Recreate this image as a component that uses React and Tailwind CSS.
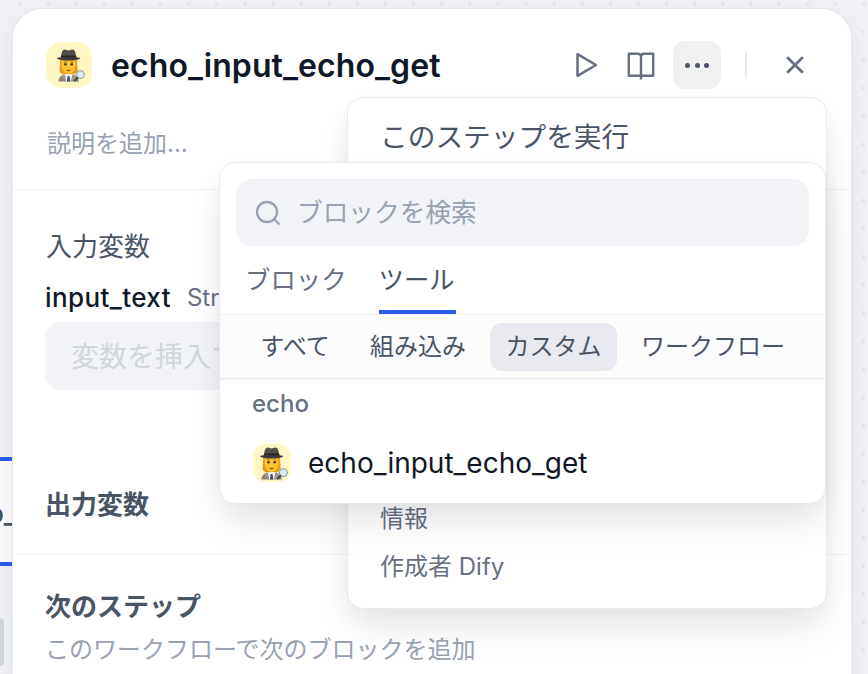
import clsx from 'clsx'

const FILTERS = [
  { id: 'all', label: 'すべて', width: 'w-[102px]' },
  { id: 'builtin', label: '組み込み', width: 'w-[128px]' },
  { id: 'custom', label: 'カスタム', width: 'w-[127px]' },
  { id: 'workflow', label: 'ワークフロー', width: 'w-[176px]' },
]

const TABS = [
  { id: 'blocks', label: 'ブロック' },
  { id: 'tools', label: 'ツール' },
]

function Detective() {
  return (
    <svg viewBox="-2 0 32 33" className="h-[33px] w-8 shrink-0">
      <path d="M3.300 32.500c.3-4 2.300-6 6-6.800h8.600c3.700.8 5.700 2.800 6 6.800z" fill="#8b8376" />
      <path d="M9.800 25.500h7.600l-1.400 7h-4.800z" fill="#f1f2f5" />
      <path d="M12.700 27h1.800l.8 5.500h-3.400z" fill="#414a5e" />
      <path d="M9 25 6 27.300l4.800 5.200zM18.200 25l3 2.300-4.800 5.200z" fill="#a39a8b" />
      <path d="M5.300 10.500h16.600l.8 11.500c-.9 2.300-2.600 3.200-4.500 3.100H9c-1.900.1-3.600-.8-4.500-3.100z" fill="#e99a1d" />
      <path d="M6.800 10.500h13.600v6.300c0 4.600-3.100 8.200-6.800 8.200s-6.800-3.600-6.800-8.200z" fill="#fcc62f" />
      <circle cx="10.500" cy="15.300" r="1.300" fill="#4a2e1c" />
      <circle cx="16.700" cy="15.300" r="1.300" fill="#4a2e1c" />
      <path d="M8.800 13.100q1.500-.8 3-.2M15.400 12.900q1.500-.6 3 .2" stroke="#8a5513" strokeWidth=".7" fill="none" />
      <path d="M11.700 21q1.900 1.100 3.800 0" stroke="#a4491c" strokeWidth="1.200" fill="none" />
      <path d="M6 8.500C6.400 3.500 7.500.6 9.800.6c1.600 0 2.400.8 3.800.8s2.200-.8 3.800-.8c2.300 0 3.400 2.900 3.800 7.900z" fill="#514f4d" />
      <path d="M6 6.600h15.200l.3 3H5.700z" fill="#252423" />
      <path d="M1.800 9c3.300-.9 6.300-.9 11.800-.9s8.500 0 11.800.9c-1.700 2-6.200 2.600-11.800 2.600S3.500 11 1.800 9z" fill="#3c3a39" />
      <circle cx="25.400" cy="25.600" r="3.900" fill="#d9edf6" stroke="#929ba3" strokeWidth="1.100" />
      <path d="m22.500 28.700-2.500 3" stroke="#44474c" strokeWidth="1.800" strokeLinecap="round" />
    </svg>
  )
}

function PlayIcon() {
  return (
    <svg width="24" height="28" viewBox="0 0 24 28" fill="none" stroke="#676f83" strokeWidth="2.500" strokeLinejoin="round">
      <path d="M2.500 3.200v21.600L21 14z" />
    </svg>
  )
}

function BookIcon() {
  return (
    <svg width="30" height="30" viewBox="0 0 30 30" fill="none" stroke="#676f83" strokeWidth="2.400" strokeLinejoin="round">
      <path d="M15 29.500V7c0-2-1.200-3.200-3-3.200H2.800v21.900h24.400V3.800H18c-1.800 0-3 1.200-3 3.200" />
    </svg>
  )
}

function PanelHeader() {
  return (
    <div className="h-[181px] border-b border-[#eff0f2] pt-8 pl-[33px] pr-7">
      <div className="flex h-12 items-center">
        <div className="flex size-[46px] shrink-0 items-center justify-center rounded-[15px] bg-[#fef7c3]">
          <Detective />
        </div>
        <h1 className="ml-[19px] w-[464px] shrink-0 pt-0.5 text-[32px] leading-[46px] font-semibold tracking-[0.08px] text-[#101828]">echo_input_echo_get</h1>
        <div className="flex shrink-0 items-center">
          <PlayIcon />
          <div className="ml-[27px]"><BookIcon /></div>
          <div className="ml-[17px] flex size-12 items-center justify-center gap-[4.400px] rounded-xl bg-[#f1f1f1]">
            <span className="size-[5px] rounded-full bg-[#495464]" />
            <span className="size-[5px] rounded-full bg-[#495464]" />
            <span className="size-[5px] rounded-full bg-[#495464]" />
          </div>
          <div className="ml-6 h-7 w-0.5 bg-[#e9eaef]" />
          <svg className="ml-[39px]" width="18" height="18" viewBox="0 0 18 18" stroke="#676f83" strokeWidth="2.800">
            <path d="m1.200 1.200 15.600 15.600M16.800 1.200 1.200 16.800" />
          </svg>
        </div>
      </div>
      <p className="mt-[37px] pl-px text-2xl leading-9 text-[#98a2b2]">説明を追加...</p>
    </div>
  )
}

function StepPanel() {
  return (
    <main className="ml-[13px] mt-[9px] flex h-[700px] w-[838px] flex-col rounded-[30px] bg-white shadow-[0_0_0_1px_#e8e9ed,0_6px_20px_rgba(16,24,40,0.07)]">
      <PanelHeader />
      <section className="h-[365px] border-b border-[#eff0f2] pt-[39px] pl-8 pr-8">
        <h2 className="pl-px text-[26px] leading-9 text-[#495464]">入力変数</h2>
        <div className="mt-[14px] flex h-9 items-center gap-4">
          <span className="pt-px text-[26px] leading-9 font-medium tracking-[0.4px] text-[#101828]">input_text</span>
          <span className="pt-px text-2xl leading-9 text-[#676f83]">String</span>
        </div>
        <div className="mt-[7px] flex h-[68px] items-center rounded-2xl bg-[#f2f3f7] pl-[26px] pt-0.5 text-[28px] text-[#d0d5dc]">変数を挿入する</div>
        <h2 className="mt-[97px] text-[26px] leading-9 font-bold text-[#495464]">出力変数</h2>
      </section>
      <section className="pt-[34px] pl-8">
        <h2 className="text-[26px] leading-9 font-bold text-[#495464]">次のステップ</h2>
        <p className="mt-[7px] text-2xl leading-9 text-[#98a2b2]">このワークフローで次のブロックを追加</p>
      </section>
    </main>
  )
}

function StepMenu() {
  return (
    <div className="absolute top-[97px] left-[347px] flex h-[512px] w-[480px] flex-col justify-between rounded-2xl border border-[#e8eaed] bg-white px-8 pt-[19px] pb-[23px] shadow-[0_24px_40px_-8px_rgba(16,24,40,0.10),0_8px_24px_-2px_rgba(16,24,40,0.05)]">
      <div className="text-[27.700px] leading-10 text-[#495464]">このステップを実行</div>
      <div className="flex flex-col gap-3 text-2xl leading-9 text-[#676f83]">
        <div>情報</div>
        <div>作成者 Dify</div>
      </div>
    </div>
  )
}

function BlockSelector() {
  return (
    <div className="absolute top-[162px] left-[219px] flex h-[342px] w-[607px] flex-col overflow-hidden rounded-2xl border border-[#e8eaed] bg-white shadow-[0_24px_40px_-8px_rgba(16,24,40,0.10),0_8px_24px_-2px_rgba(16,24,40,0.05)]">
      <div className="mx-4 mt-4 flex h-[67px] shrink-0 items-center rounded-2xl bg-[#f2f3f7] pl-[19px]">
        <svg width="26" height="26" viewBox="0 0 26 26" fill="none" stroke="#98a2b2" strokeWidth="2.300">
          <circle cx="12" cy="12" r="10" />
          <path d="m18.800 18.800 5.600 5.600" />
        </svg>
        <span className="ml-4 pt-px text-[25.700px] text-[#98a2b2]">ブロックを検索</span>
      </div>
      <div className="flex h-[69px] shrink-0 gap-8 border-b border-[#eff0f2] pl-[25px]">
        {TABS.map(t => (
          <div key={t.id} className={clsx('h-[68px] shrink-0 border-b-4 pt-4 text-[25.400px] leading-9 whitespace-nowrap',
            t.id === 'tools' ? 'w-[77px] border-[#2b5ce8] text-[#495464]' : 'border-transparent text-[#676f83]'
          )}>{t.label}</div>
        ))}
      </div>
      <div className="flex h-16 shrink-0 items-center gap-2 border-b border-[#e6e8ec] bg-[#fcfcfc] pl-6 shadow-[0_2px_4px_rgba(16,24,40,0.04)]">
        {FILTERS.map(f => (
          <div key={f.id} className={clsx('flex h-12 shrink-0 items-center justify-center rounded-xl pt-px text-2xl text-[#495464]', f.width,
            f.id === 'custom' && 'bg-[#e9eaef]'
          )}>{f.label}</div>
        ))}
      </div>
      <div className="pt-[7px] pl-[33px]">
        <div className="-ml-px text-2xl leading-9 font-medium text-[#676f83]">echo</div>
        <div className="mt-[22px] flex h-[38px] items-center">
          <div className="flex size-[38px] shrink-0 items-center justify-center rounded-xl bg-[#fef7c3]">
            <Detective />
          </div>
          <span className="ml-[17px] text-[28px] text-[#101828]">echo_input_echo_get</span>
        </div>
      </div>
    </div>
  )
}

// neighbouring node of the canvas, mostly hidden behind the panel
function CanvasNode() {
  return (
    <div className="absolute top-[457px] left-0 w-3">
      <div className="h-[109px] border-y-4 border-[#2b5ce8] bg-[#fbfbfd]">
        <div className="flex h-full items-center justify-end pt-1 text-[26px] font-semibold text-[#495464]">
          <span className="-mr-1">o_</span>
        </div>
      </div>
      <div className="mt-[52px] h-12 w-1 rounded-r bg-[#d0d5dc]" />
    </div>
  )
}

export default function App() {
  return (
    <div
      lang="ja"
      className="relative flex h-[674px] w-[868px] flex-col overflow-hidden bg-[#f0f1f5] bg-[radial-gradient(circle_at_center,#e2e4e9_1.700px,transparent_2.300px)] bg-[length:28.120px_28.120px] bg-position-[6px_-10.200px] font-['Inter','Noto_Sans_CJK_JP',sans-serif]"
    >
      <CanvasNode />
      <div className="relative flex flex-col">
        <StepPanel />
      </div>
      <StepMenu />
      <BlockSelector />
    </div>
  )
}
